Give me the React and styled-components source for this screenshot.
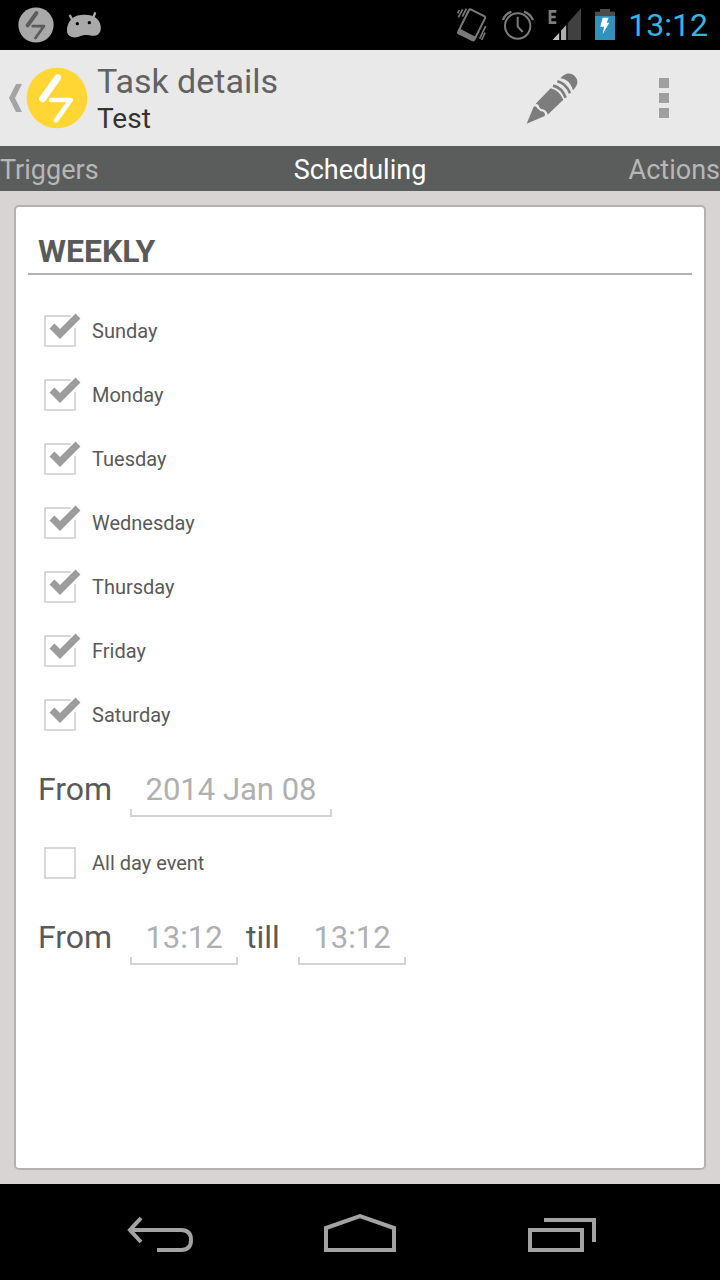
import React, { useState } from 'react';
import styled, { createGlobalStyle } from 'styled-components';

const GlobalStyle = createGlobalStyle`
  * {
    box-sizing: border-box;
  }
  body {
    margin: 0;
    background: #000;
    font-family: Roboto, "Noto Sans", sans-serif;
  }
  button, input {
    font-family: inherit;
  }
  svg {
    display: block;
    flex: none;
  }
`;

const Screen = styled.div`
  display: flex;
  flex-direction: column;
  min-height: 100vh;
  background: #d9d4d4;
`;

const StatusBar = styled.div`
  display: flex;
  align-items: center;
  justify-content: space-between;
  height: 50px;
  padding: 0 12px 0 18px;
  background: #000;
`;

const StatusGroup = styled.div`
  display: flex;
  align-items: center;
  gap: 12px;
`;

const Clock = styled.span`
  font-size: 32px;
  line-height: 48px;
  color: #33b5e5;
`;

const Header = styled.header`
  display: flex;
  align-items: center;
  height: 96px;
  background: #e9e9e9;
`;

const UpButton = styled.button`
  display: flex;
  align-items: center;
  gap: 3px;
  padding: 0 9px 0 7px;
  border: 0;
  background: none;
`;

const Titles = styled.div`
  flex: 1;
  min-width: 0;
`;

const Title = styled.h1`
  margin: 0;
  font-size: 34px;
  font-weight: 400;
  line-height: 42px;
  color: #626262;
`;

const Subtitle = styled.p`
  margin: 0;
  font-size: 28px;
  line-height: 34px;
  color: #333;
`;

const ActionButton = styled.button`
  display: flex;
  align-items: center;
  justify-content: center;
  width: 112px;
  height: 96px;
  padding: 0;
  border: 0;
  background: none;
`;

const TabStrip = styled.nav`
  display: grid;
  grid-template-columns: 1fr auto 1fr;
  height: 45px;
  padding-top: 3px;
  background: #5b5d5c;
`;

const Tab = styled.a`
  font-size: 27px;
  line-height: 42px;
  text-decoration: none;
  text-align: ${props => props.$align};
  color: ${props => (props.$active ? '#fff' : '#b6b7b6')};
`;

const Card = styled.main`
  flex: 1;
  margin: 14px;
  padding: 24px 12px;
  border: 2px solid #b6b1b1;
  border-radius: 5px;
  background: #fff;
`;

const CardTitle = styled.h2`
  margin: 0 0 24px;
  padding: 0 10px 2px;
  border-bottom: 2px solid #b3b3b3;
  font-size: 32px;
  font-weight: 700;
  line-height: 40px;
  color: #5a5a5a;
`;

const CheckRow = styled.label`
  display: flex;
  align-items: center;
  gap: 8px;
  height: 64px;
  padding-left: 16px;
  font-size: 20px;
  color: #5a5a5a;
`;

const CheckBox = styled.span`
  position: relative;
  width: 40px;
  height: 40px;

  input {
    position: absolute;
    inset: 0;
    width: 100%;
    height: 100%;
    margin: 0;
    opacity: 0;
  }
`;

const FieldRow = styled.div`
  display: flex;
  align-items: center;
  height: 84px;
  padding-left: 10px;
`;

const FieldLabel = styled.label`
  width: ${props => props.$width}px;
  font-size: 32px;
  color: #5a5a5a;
`;

const Field = styled.input`
  width: ${props => props.$width}px;
  height: 56px;
  margin-right: 8px;
  padding: 2px 0 0;
  border: 0;
  border-bottom: 2px solid #d3d3d3;
  border-radius: 0;
  outline: 0;
  /* short ticks at both ends of the underline */
  background:
    linear-gradient(#d3d3d3, #d3d3d3) left bottom / 2px 6px no-repeat,
    linear-gradient(#d3d3d3, #d3d3d3) right bottom / 2px 6px no-repeat;
  font-size: 31px;
  text-align: center;
  color: #b0b0b0;
`;

const NavBar = styled.footer`
  display: flex;
  justify-content: center;
  height: 96px;
  background: #000;
`;

const NavButton = styled.button`
  display: flex;
  flex: 0 1 200px;
  align-items: center;
  justify-content: center;
  padding: 0;
  border: 0;
  background: none;
`;

const Logo = ({ size, disc, bolt }) => (
  <svg width={size} height={size} viewBox="78 201 186 186" fill="none" strokeLinecap="round" strokeLinejoin="round">
    <circle cx="171" cy="294" r="91" fill={disc} />
    <path d="M173 233L128 296" stroke={bolt} strokeWidth="21" />
    <path d="M154 300H212L168 361" stroke={bolt} strokeWidth="14" />
  </svg>
);

const DroidIcon = () => (
  <svg width="36" height="28" viewBox="198 33 108 84">
    <path d="M210 47L218 62M285 40L279 54" stroke="#a9a9a9" strokeWidth="7" strokeLinecap="round" />
    <path d="M214 58C224 46 240 44 254 44C268 44 280 46 289 55C300 64 304 78 302 90C299 104 288 109 276 107C262 104 246 105 236 110C220 116 203 110 201 94C200 80 205 68 214 58Z" fill="#a9a9a9" />
    <circle cx="232" cy="71" r="5" fill="#000" />
    <circle cx="268" cy="68" r="5" fill="#000" />
  </svg>
);

const VibrateIcon = () => (
  <svg width="34" height="38" viewBox="36 18 102 114" fill="none" stroke="#7a7a7a" strokeWidth="6">
    <path d="M83 28L125 49Q128 51 126 55L94 119Q92 122 88 120L47 100Q44 98 46 94L78 30Q80 27 83 28Z" />
    <path d="M51 90L96 113L90 121L46 98Z" fill="#7a7a7a" />
    <path d="M70 26L58 50M59 28L46 52M49 30L44 40M128 78L110 116M126 98L116 120" strokeWidth="5" />
  </svg>
);

const AlarmIcon = () => (
  <svg width="34" height="38" viewBox="180 18 102 114" fill="none" stroke="#7a7a7a" strokeWidth="6">
    <circle cx="230" cy="78" r="38" />
    <path d="M230 50V80L245 96" />
    <path d="M186 60Q192 42 211 35M249 35Q268 42 276 60" strokeWidth="7" />
  </svg>
);

const SignalIcon = () => (
  <svg width="35" height="38" viewBox="324 18 105 114">
    <path d="M426 25V120H341Z" fill="#404040" />
    <path d="M361 98V120H341Z" fill="#c4c4c4" />
    <path d="M366 92L382 75V120H366Z" fill="#b0b0b0" />
    <path d="M361 90H366V120H361ZM382 70H386V120H382Z" fill="#000" />
    <path d="M352 34H333V68H352M333 51H350" fill="none" stroke="#7d7d7d" strokeWidth="8" />
  </svg>
);

const BatteryIcon = () => (
  <svg width="22" height="38" viewBox="459 18 66 114">
    <path d="M477 27H507V35H522V48H462V35H477Z" fill="#4c4c4c" />
    <path d="M462 48H522V120H462Z" fill="#2f93bd" />
    <path d="M485 53H503L497 68H505L485 102L489 80H478Z" fill="#fff" />
  </svg>
);

const UpIcon = () => (
  <svg width="16" height="30" viewBox="21 249 48 90">
    <path d="M48 252H66L45 294L66 336H48L27 294Z" fill="#a2a4a5" />
  </svg>
);

const PencilIcon = () => (
  <svg width="54" height="54" viewBox="75 60 162 162" fill="#7d7d7d">
    <path d="M80 218L101 167Q107 163 112 172Q119 181 130 182Q137 187 134 195Z" />
    <path d="M107 158L152 112Q178 118 190 146L143 191Q140 178 128 175Q118 174 116 163Q113 158 107 158Z" />
    <path d="M159 104Q186 110 197 140M172 91Q199 98 210 127" fill="none" stroke="#7d7d7d" strokeWidth="8" />
    <path d="M181 82C194 65 211 63 223 74C236 86 236 100 219 118C213 98 202 85 181 82Z" />
  </svg>
);

const MoreIcon = () => (
  <svg width="10" height="40" viewBox="0 0 10 40" fill="#9f9f9f">
    <path d="M0 0H10V10H0ZM0 15H10V25H0ZM0 30H10V40H0Z" />
  </svg>
);

const NavIcon = ({ d }) => (
  <svg width="80" height="48" viewBox="0 0 80 48" fill="none" stroke="#a3a3a3" strokeWidth="4">
    <path d={d} />
  </svg>
);

const CheckIcon = ({ checked }) => (
  <svg width="40" height="40" viewBox="0 0 40 40" fill="none">
    <path d="M1 5H31V35H1Z" stroke="#cbcbcb" strokeWidth="1.5" />
    {checked && (
      <g>
        <path d="M27 3H34V17H27Z" fill="#fff" />
        <path d="M8 15L16 23L34 5" stroke="#9c9c9c" strokeWidth="7" />
      </g>
    )}
  </svg>
);

const Check = ({ label, checked, onChange }) => (
  <CheckRow>
    <CheckBox>
      <CheckIcon checked={checked} />
      <input type="checkbox" checked={checked} onChange={onChange} />
    </CheckBox>
    {label}
  </CheckRow>
);

const DAYS = ['Sunday', 'Monday', 'Tuesday', 'Wednesday', 'Thursday', 'Friday', 'Saturday'];

const NAV = [
  { label: 'Back', d: 'M21 10L10 22L21 34M10 22H61C68 22 71 26 71 32S68 42 61 42H37' },
  { label: 'Home', d: 'M6 42V20L40 8L74 20V42Z' },
  { label: 'Recent apps', d: 'M10 22H62V42H10ZM24 12H74V34' },
];

const App = () => {
  const [days, setDays] = useState(DAYS);
  const [allDay, setAllDay] = useState(false);

  const toggleDay = day =>
    setDays(days.includes(day) ? days.filter(d => d !== day) : [...days, day]);

  return (
    <Screen>
      <GlobalStyle />
      <StatusBar>
        <StatusGroup>
          <Logo size={36} disc="#a9a9a9" bolt="#5c5c5c" />
          <DroidIcon />
        </StatusGroup>
        <StatusGroup>
          <VibrateIcon />
          <AlarmIcon />
          <SignalIcon />
          <BatteryIcon />
          <Clock>13:12</Clock>
        </StatusGroup>
      </StatusBar>

      <Header>
        <UpButton aria-label="Navigate up">
          <UpIcon />
          <Logo size={62} disc="#ffd633" bolt="#fff" />
        </UpButton>
        <Titles>
          <Title>Task details</Title>
          <Subtitle>Test</Subtitle>
        </Titles>
        <ActionButton aria-label="Edit"><PencilIcon /></ActionButton>
        <ActionButton aria-label="More options"><MoreIcon /></ActionButton>
      </Header>

      <TabStrip>
        <Tab href="#triggers" $align="left">Triggers</Tab>
        <Tab href="#scheduling" $align="center" $active>Scheduling</Tab>
        <Tab href="#actions" $align="right">Actions</Tab>
      </TabStrip>

      <Card>
        <CardTitle>WEEKLY</CardTitle>
        {DAYS.map(day => (
          <Check key={day} label={day} checked={days.includes(day)} onChange={() => toggleDay(day)} />
        ))}
        <FieldRow>
          <FieldLabel htmlFor="date" $width={92}>From</FieldLabel>
          <Field id="date" $width={202} defaultValue="2014 Jan 08" />
        </FieldRow>
        <Check label="All day event" checked={allDay} onChange={() => setAllDay(!allDay)} />
        <FieldRow>
          <FieldLabel htmlFor="start" $width={92}>From</FieldLabel>
          <Field id="start" $width={108} defaultValue="13:12" />
          <FieldLabel htmlFor="end" $width={52}>till</FieldLabel>
          <Field id="end" $width={108} defaultValue="13:12" />
        </FieldRow>
      </Card>

      <NavBar>
        {NAV.map(item => (
          <NavButton key={item.label} aria-label={item.label}>
            <NavIcon d={item.d} />
          </NavButton>
        ))}
      </NavBar>
    </Screen>
  );
};

export default App;
